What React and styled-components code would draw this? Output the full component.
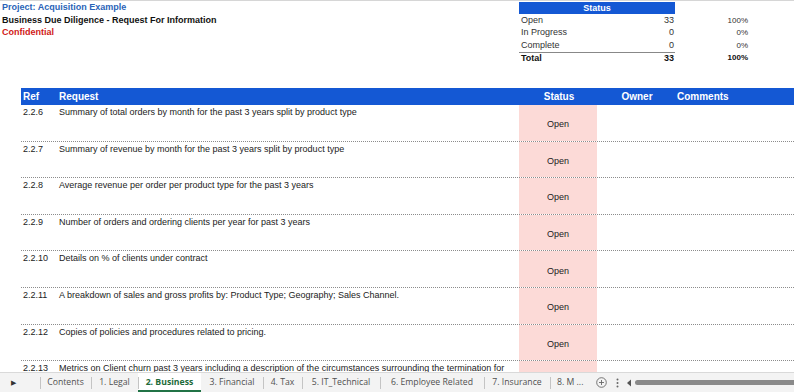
import React from "react";
import styled, { createGlobalStyle } from "styled-components";

const GlobalStyle = createGlobalStyle`
  html, body {
    margin: 0;
    padding: 0;
    background: #ffffff;
  }
  body {
    font-family: "Liberation Sans", Arial, sans-serif;
    overflow: hidden;
  }
`;

const Sheet = styled.div`
  width: 794px;
  height: 392px;
  display: flex;
  flex-direction: column;
  overflow: hidden;
  border-top: 1px solid #d6d6d6;
  box-sizing: border-box;
`;

const Grid = styled.div`
  flex: 1;
  overflow: hidden;
`;

const Top = styled.div`
  height: 87px;
  display: grid;
  grid-template-columns: 519px 275px;
`;

const Titles = styled.div`
  padding: 0 0 0 2px;
  font-size: 9px;
  font-weight: bold;
  line-height: 12.5px;
`;

const TitleLine = styled.div`
  color: ${(p) => p.color || "#111"};
`;

const Summary = styled.div`
  display: grid;
  grid-template-columns: 120px 36px 73px;
  grid-auto-rows: 12.4px;
  align-items: center;
  margin-top: 1px;
  font-size: 9px;
  color: #333;
`;

const SummaryHead = styled.div`
  grid-column: 1 / 3;
  height: 12px;
  background: #1458d4;
  color: #fff;
  font-weight: bold;
  text-align: center;
  line-height: 12px;
`;

const SummaryCell = styled.div`
  padding: ${(p) => (p.num ? "0 1px 0 0" : "0 0 0 2px")};
  text-align: ${(p) => (p.num || p.pct ? "right" : "left")};
  font-size: ${(p) => (p.pct ? "8px" : "9px")};
  font-weight: ${(p) => (p.total ? "bold" : "normal")};
  color: ${(p) => (p.total ? "#111" : "#333")};
  border-top: ${(p) => (p.rule ? "1px solid #888" : "none")};
  line-height: 11px;
  height: 11.4px;
`;

const HeadRow = styled.div`
  margin-left: 21px;
  height: 17px;
  background: #1458d4;
  display: grid;
  grid-template-columns: 36px 462px 78px 78px 1fr;
  align-items: center;
  color: #fff;
  font-weight: bold;
  font-size: 10px;
`;

const HeadCell = styled.div`
  padding-left: 2px;
  text-align: ${(p) => (p.center ? "center" : "left")};
`;

const Row = styled.div`
  margin-left: 21px;
  height: 35.6px;
  display: grid;
  grid-template-columns: 36px 462px 78px 78px 1fr;
  border-bottom: 1px dotted #8c8c8c;
  font-size: 9px;
  color: #222;
`;

const Cell = styled.div`
  padding: 2px 0 0 2px;
  line-height: 11px;
`;

const StatusCell = styled.div`
  background: #fcdad7;
  display: flex;
  align-items: center;
  justify-content: center;
  padding-top: 3px;
  color: #222;
`;

const TabBar = styled.div`
  height: 19px;
  flex-shrink: 0;
  background: #f3f3f3;
  border-top: 1px solid #d9d9d9;
  display: flex;
  align-items: stretch;
  font-family: "Open Sans", "Noto Sans", sans-serif;
  font-size: 8.7px;
  color: #505050;
`;

const NavArrow = styled.div`
  width: 40px;
  flex-shrink: 0;
  display: flex;
  align-items: center;
  padding-left: 11px;
  box-sizing: border-box;
  color: #333;
  font-size: 7px;
`;

const Tab = styled.div`
  position: relative;
  flex: 0 0 ${(p) => p.w}px;
  box-sizing: border-box;
  display: flex;
  align-items: center;
  justify-content: ${(p) => (p.left ? "flex-start" : "center")};
  padding-left: ${(p) => (p.left ? "7px" : "0")};
  white-space: nowrap;
  background: ${(p) => (p.active ? "#ffffff" : "transparent")};
  color: ${(p) => (p.active ? "#1e6b3a" : "#505050")};
  font-weight: ${(p) => (p.active ? 700 : 400)};
  border-bottom: 2px solid ${(p) => (p.active ? "#217346" : "transparent")};
  &::before {
    content: "";
    display: ${(p) => (p.noSep ? "none" : "block")};
    position: absolute;
    left: 0;
    top: 4px;
    height: 12px;
    border-left: 1px solid #c4c4c4;
  }
`;

const Tools = styled.div`
  flex-shrink: 0;
  display: flex;
  align-items: center;
  gap: 9px;
  padding-left: 2px;
  color: #555;
`;

const Scroll = styled.div`
  flex: 1;
  display: flex;
  align-items: center;
  gap: 3px;
  padding-left: 7px;
`;

const Thumb = styled.div`
  flex: 1;
  height: 5px;
  border-radius: 3px 0 0 3px;
  background: #8a8a8a;
`;

const rows = [
  ["2.2.6", "Summary of total orders by month for the past 3 years split by product type"],
  ["2.2.7", "Summary of revenue by month for the past 3 years split by product type"],
  ["2.2.8", "Average revenue per order per product type for the past 3 years"],
  ["2.2.9", "Number of orders and ordering clients per year for past 3 years"],
  ["2.2.10", "Details on % of clients under contract"],
  ["2.2.11", "A breakdown of sales and gross profits by: Product Type; Geography; Sales Channel."],
  ["2.2.12", "Copies of policies and procedures related to pricing."],
  ["2.2.13", "Metrics on Client churn past 3 years including a description of the circumstances surrounding the termination for"],
];

const tabs = [
  ["Contents", 51],
  ["1. Legal", 47],
  ["2. Business", 63],
  ["3. Financial", 62],
  ["4. Tax", 39],
  ["5. IT_Technical", 78],
  ["6. Employee Related", 104],
  ["7. Insurance", 66],
  ["8. M ...", 44],
];

export default function App() {
  return (
    <Sheet>
      <GlobalStyle />
      <Grid>
        <Top>
          <Titles>
            <TitleLine color="#2a64b8">Project: Acquisition Example</TitleLine>
            <TitleLine>Business Due Diligence - Request For Information</TitleLine>
            <TitleLine color="#d01818">Confidential</TitleLine>
          </Titles>
          <Summary>
            <SummaryHead>Status</SummaryHead>
            <div />
            <SummaryCell>Open</SummaryCell>
            <SummaryCell num>33</SummaryCell>
            <SummaryCell pct>100%</SummaryCell>
            <SummaryCell>In Progress</SummaryCell>
            <SummaryCell num>0</SummaryCell>
            <SummaryCell pct>0%</SummaryCell>
            <SummaryCell>Complete</SummaryCell>
            <SummaryCell num>0</SummaryCell>
            <SummaryCell pct>0%</SummaryCell>
            <SummaryCell total rule>Total</SummaryCell>
            <SummaryCell total rule num>33</SummaryCell>
            <SummaryCell total pct>100%</SummaryCell>
          </Summary>
        </Top>
        <HeadRow>
          <HeadCell>Ref</HeadCell>
          <HeadCell>Request</HeadCell>
          <HeadCell center>Status</HeadCell>
          <HeadCell center>Owner</HeadCell>
          <HeadCell>Comments</HeadCell>
        </HeadRow>
        {rows.map(([ref, text]) => (
          <Row key={ref}>
            <Cell>{ref}</Cell>
            <Cell>{text}</Cell>
            <StatusCell>Open</StatusCell>
            <div />
            <div />
          </Row>
        ))}
      </Grid>
      <TabBar>
        <NavArrow>▶</NavArrow>
        {tabs.map(([t, w], i) => (
          <Tab
            key={t}
            w={w}
            active={t === "2. Business"}
            noSep={t === "3. Financial"}
            left={i === tabs.length - 1}
          >
            {t}
          </Tab>
        ))}
        <Tools>
          <svg width="11" height="11" viewBox="0 0 11 11">
            <circle cx="5.5" cy="5.5" r="4.8" fill="none" stroke="#666" strokeWidth="0.9" />
            <path d="M5.5 3v5M3 5.5h5" stroke="#666" strokeWidth="0.9" />
          </svg>
          <svg width="3" height="10" viewBox="0 0 3 10">
            <circle cx="1.5" cy="1.5" r="1" fill="#666" />
            <circle cx="1.5" cy="5" r="1" fill="#666" />
            <circle cx="1.5" cy="8.5" r="1" fill="#666" />
          </svg>
        </Tools>
        <Scroll>
          <svg width="6" height="8" viewBox="0 0 6 8">
            <path d="M5 0.5L1 4l4 3.5z" fill="#555" />
          </svg>
          <Thumb />
        </Scroll>
      </TabBar>
    </Sheet>
  );
}
